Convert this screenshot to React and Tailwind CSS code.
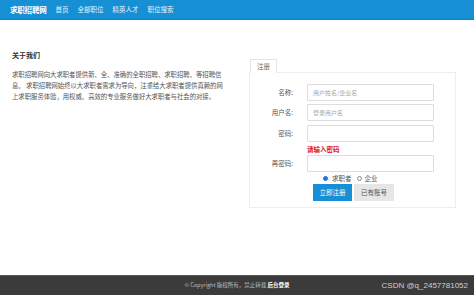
export default function App() {
  const font = { fontFamily: '"Noto Sans CJK SC", "Liberation Sans", sans-serif' };
  return (
    <div className="h-[295px] flex flex-col bg-white text-[#333]" style={font}>
      {/* Header */}
      <header className="h-[20px] bg-[#168fd4] flex items-center pl-[10px] border-b border-[#0f7fc2]">
        <span className="text-white font-bold text-[7.5px] leading-none tracking-[-0.2px]">求职招聘网</span>
        <nav className="flex items-center ml-[9px] gap-[9px] text-[6.5px] text-white/90 leading-none">
          <span>首页</span>
          <span>全部职位</span>
          <span>精英人才</span>
          <span>职位搜索</span>
        </nav>
      </header>

      {/* Main */}
      <div className="flex-1 flex">
        {/* About */}
        <div className="w-[215px] ml-[12px] mt-[32px]">
          <h2 className="text-[7px] font-bold text-[#333] leading-none">关于我们</h2>
          <p className="mt-[10px] text-[6.35px] leading-[11px] text-[#555]">
            求职招聘网向大求职者提供新、全、准确的全职招聘、求职招聘、等招聘信息。 求职招聘网始终以大求职者需求为导向，注重给大求职者提供真赖的网<br />上求职服务体验，用权威、高效的专业服务做好大求职者与社会的对接。
          </p>
        </div>

        {/* Register panel */}
        <div className="ml-[22px] mt-[38px] w-[207px]">
          <div className="flex">
            <div className="h-[14px] w-[27px] ml-[1px] border border-b-0 border-[#e5e5e5] bg-white flex items-center justify-center text-[6.5px] text-[#666] leading-none relative top-[1px]">
              注册
            </div>
          </div>
          <div className="border border-[#eee] pt-[11px] pb-[6px]">
            <FormRow label="名称:" placeholder="用户姓名/企业名" />
            <FormRow label="用户名:" placeholder="登录用户名" className="mt-[3px]" />
            <FormRow label="密码:" className="mt-[4px]" />
            <div className="ml-[57px] mt-[3px] text-[6.5px] font-bold text-[#e3141b] leading-[9px]">请输入密码</div>
            <FormRow label="再密码:" className="mt-[1px]" />
            <div className="flex items-center ml-[73px] mt-[2px] text-[6.5px] text-[#555] leading-none h-[9px]">
              <span className="w-[5px] h-[5px] rounded-full bg-[#1a73e8] border border-[#1a73e8]" />
              <span className="ml-[4px]">求职者</span>
              <span className="ml-[5px] w-[5px] h-[5px] rounded-full border border-[#888] bg-white" />
              <span className="ml-[3px]">企业</span>
            </div>
            <div className="flex ml-[63px] mt-[1px] gap-[2px]">
              <button className="w-[39px] h-[17px] bg-[#168fd4] text-white text-[6.5px] leading-none">立即注册</button>
              <button className="w-[40px] h-[17px] bg-[#e6e6e6] text-[#555] text-[6.5px] leading-none">已有账号</button>
            </div>
          </div>
        </div>
      </div>

      {/* Footer */}
      <footer className="h-[20px] bg-[#3b3b3b] border-t border-[#555] flex items-center relative">
        <div className="flex-1 text-center text-[5.5px] text-[#bbb] leading-none">
          © Copyright 版权所有，禁止转载 <span className="font-bold text-white">后台登录</span>
        </div>
        <span className="absolute right-[6px] text-[8px] text-[#d0d0d0] leading-none" style={{ fontFamily: '"Liberation Sans", sans-serif' }}>
          CSDN @q_2457781052
        </span>
      </footer>
    </div>
  );
}

function FormRow({ label, placeholder, className = "" }) {
  return (
    <div className={`flex items-center ${className}`}>
      <label className="w-[43px] text-right text-[6.5px] text-[#555] leading-none">{label}</label>
      <div className="ml-[14px] w-[127px] h-[17px] border border-[#ddd] rounded-[1px] bg-white flex items-center px-[5px] text-[6px] text-[#aaa] leading-none">
        {placeholder}
      </div>
    </div>
  );
}
